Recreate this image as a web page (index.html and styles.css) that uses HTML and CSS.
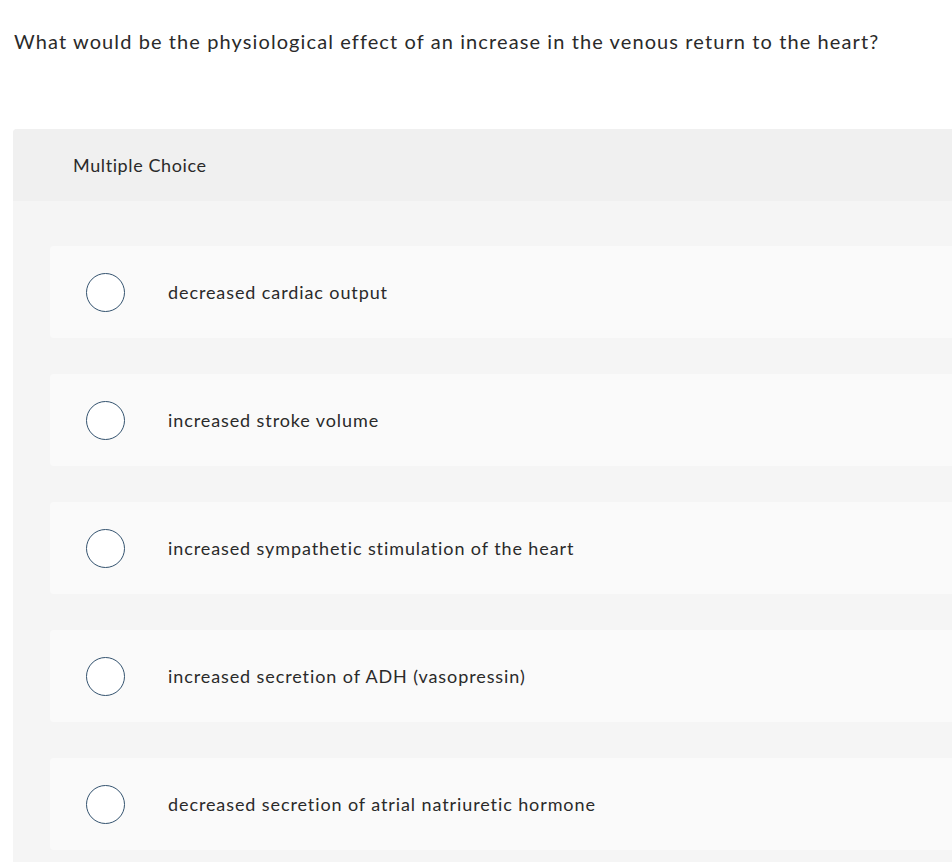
FILE: index.html
```html
<!DOCTYPE html>
<html>
<head>
<meta charset="utf-8">
<link rel="stylesheet" href="styles.css">
</head>
<body>
<div class="question">What would be the physiological effect of an increase in the venous return to the heart?</div>
<div class="panel">
  <div class="panel-head">Multiple Choice</div>
  <div class="panel-body">
    <div class="option"><span class="radio"></span><span class="label">decreased cardiac output</span></div>
    <div class="option"><span class="radio"></span><span class="label">increased stroke volume</span></div>
    <div class="option"><span class="radio"></span><span class="label">increased sympathetic stimulation of the heart</span></div>
    <div class="option"><span class="radio"></span><span class="label">increased secretion of ADH (vasopressin)</span></div>
    <div class="option"><span class="radio"></span><span class="label">decreased secretion of atrial natriuretic hormone</span></div>
  </div>
</div>
</body>
</html>
```
FILE: styles.css
```css
html, body {
  margin: 0;
  padding: 0;
  background: #ffffff;
  overflow: hidden;
}
body {
  font-family: Lato, "Open Sans", sans-serif;
  color: #2a2a2a;
  width: 952px;
  height: 862px;
}
.question {
  font-size: 20px;
  letter-spacing: 1.1px;
  line-height: 24px;
  padding: 29px 0 0 14px;
  height: 129px;
  box-sizing: border-box;
  white-space: nowrap;
}
.panel {
  margin-left: 13px;
  width: 960px;
  border-radius: 4px 0 0 0;
  overflow: hidden;
  background: #f5f5f5;
}
.panel-head {
  height: 72px;
  background: #f0f0f0;
  font-size: 18px;
  letter-spacing: 0.6px;
  line-height: 72px;
  padding-left: 60px;
}
.panel-body {
  display: flex;
  flex-direction: column;
  gap: 36px;
  padding: 45px 0 40px 37px;
}
.option {
  height: 92px;
  background: #fafafa;
  border-radius: 4px 0 0 4px;
  display: flex;
  align-items: center;
  padding-left: 36px;
}
.radio {
  width: 39px;
  height: 39px;
  box-sizing: border-box;
  border: 1.6px solid #34536f;
  border-radius: 50%;
  background: #fff;
  flex: none;
}
.label {
  margin-left: 43px;
  font-size: 18px;
  letter-spacing: 0.9px;
}
```
